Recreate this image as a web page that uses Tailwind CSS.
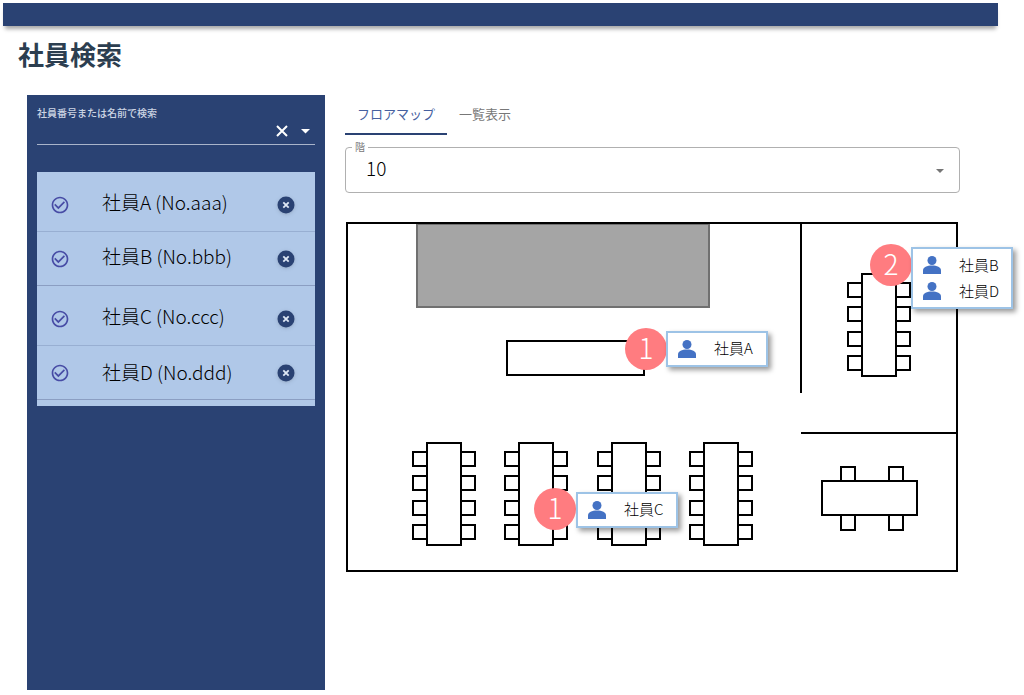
<!DOCTYPE html>
<html lang="ja">
<head>
    <meta charset="UTF-8">
    <meta name="viewport" content="width=device-width, initial-scale=1.0">
    <title>社員検索</title>
    <script src="https://cdn.jsdelivr.net/npm/@tailwindcss/browser@4"></script>
</head>
<body class="min-h-screen bg-white font-['Noto_Sans_CJK_JP',sans-serif] text-black flex flex-col">
    <!-- shared icons -->
    <svg class="hidden">
        <symbol id="check" viewBox="0 0 24 24">
            <path d="M16.59 7.58L10 14.17l-3.59-3.58L5 12l5 5 8-8zM12 2C6.48 2 2 6.48 2 12s4.48 10 10 10 10-4.48 10-10S17.52 2 12 2zm0 18c-4.42 0-8-3.58-8-8s3.58-8 8-8 8 3.58 8 8-3.58 8-8 8z"/>
        </symbol>
        <symbol id="remove" viewBox="0 0 20 20">
            <circle cx="10" cy="10" r="8.5" fill="#2a4273"/>
            <path d="M7.3 7.3l5.4 5.4M12.7 7.3l-5.4 5.4" stroke="#dfe8f5" stroke-width="1.8"/>
        </symbol>
        <symbol id="person" viewBox="0 0 20 20">
            <circle cx="10" cy="5.5" r="4.5"/>
            <path d="M1 19v-3.500c0-3.500 4-5 9-5s9 1.500 9 5V19z"/>
        </symbol>
        <symbol id="desk" viewBox="0 0 64 104">
            <g fill="white" stroke="black" stroke-width="2">
                <path d="M15 10H1v14h14M15 34H1v14h14M15 59H1v14h14M15 83H1v14h14"/>
                <path d="M49 10h14v14H49M49 34h14v14H49M49 59h14v14H49M49 83h14v14H49"/>
                <rect x="15" y="1" width="34" height="102"/>
            </g>
        </symbol>
    </svg>

    <header class="h-[23px] mt-[3px] ml-[3px] mr-[26px] bg-[#2a4273] shadow-[0_5px_4px_-2px_rgba(0,0,0,0.35)]"></header>

    <h1 class="mt-2 ml-[18px] h-10 leading-10 text-[26px] font-bold text-[#2c3e50]">社員検索</h1>

    <div class="flex flex-1 mt-[21px] mb-[5px] ml-[27px] mr-16 gap-5">
        <aside class="w-[298px] shrink-0 bg-[#2a4273] px-[10px] pt-[10px]">
            <label for="search" class="block h-4 leading-4 text-[10px] font-medium text-[#cdd5e4]">社員番号または名前で検索</label>
            <div class="flex items-center h-6 border-b border-[#a9b4ca]">
                <input id="search" type="text" class="flex-1 min-w-0 bg-transparent text-white text-sm outline-none">
                <button type="button" aria-label="クリア" class="w-4 h-4 mr-[7px] mb-1">
                    <svg viewBox="0 0 16 16" class="w-4 h-4"><path d="M3 3l10 10M13 3L3 13" stroke="white" stroke-width="2"/></svg>
                </button>
                <button type="button" aria-label="候補を開く" class="w-4 h-4 mr-[2px] mb-1">
                    <svg viewBox="0 0 16 16" class="w-4 h-4"><path d="M4 6h9l-4.500 4.500z" fill="white"/></svg>
                </button>
            </div>

            <ul class="mt-[27px] pb-[6px] bg-[#b0c8e8] text-[19px]">
                <li class="h-[60px] pt-[6px] flex items-center px-[13px] border-b border-[#98afd2]">
                    <svg class="w-5 h-5 fill-[#474ca5]"><use href="#check"/></svg>
                    <span class="flex-1 ml-8 pb-1 font-light">社員A (No.aaa)</span>
                    <button type="button" aria-label="社員Aを削除" class="w-5 h-5 mr-[6px] rounded-full drop-shadow"><svg class="w-5 h-5"><use href="#remove"/></svg></button>
                </li>
                <li class="h-[54px] flex items-center px-[13px] border-b border-[#8b9ec2]">
                    <svg class="w-5 h-5 fill-[#474ca5]"><use href="#check"/></svg>
                    <span class="flex-1 ml-8 pb-1 font-light">社員B (No.bbb)</span>
                    <button type="button" aria-label="社員Bを削除" class="w-5 h-5 mr-[6px] rounded-full drop-shadow"><svg class="w-5 h-5"><use href="#remove"/></svg></button>
                </li>
                <li class="h-[60px] pt-[6px] flex items-center px-[13px] border-b border-[#98afd2]">
                    <svg class="w-5 h-5 fill-[#474ca5]"><use href="#check"/></svg>
                    <span class="flex-1 ml-8 pb-1 font-light">社員C (No.ccc)</span>
                    <button type="button" aria-label="社員Cを削除" class="w-5 h-5 mr-[6px] rounded-full drop-shadow"><svg class="w-5 h-5"><use href="#remove"/></svg></button>
                </li>
                <li class="h-[54px] flex items-center px-[13px] border-b border-[#8b9ec2]">
                    <svg class="w-5 h-5 fill-[#474ca5]"><use href="#check"/></svg>
                    <span class="flex-1 ml-8 font-light">社員D (No.ddd)</span>
                    <button type="button" aria-label="社員Dを削除" class="w-5 h-5 mr-[6px] rounded-full drop-shadow"><svg class="w-5 h-5"><use href="#remove"/></svg></button>
                </li>
            </ul>
        </aside>

        <main class="flex-1 min-w-0">
            <nav class="flex h-10 text-[13px]">
                <a href="#map" class="px-3 leading-[38px] border-b-2 border-[#2a4273] text-[#4560a0]">フロアマップ</a>
                <a href="#list" class="px-3 leading-[38px] text-[#777777]">一覧表示</a>
            </nav>

            <div class="relative mt-3">
                <label for="floor" class="absolute left-[7px] -top-2 px-[3px] h-4 leading-4 bg-white text-[10px] text-[#777777]">階</label>
                <select id="floor" class="appearance-none w-full h-[46px] px-5 pb-[3px] border border-[#b0b0b0] rounded bg-white text-[19px] font-light">
                    <option>10</option>
                </select>
                <svg viewBox="0 0 10 6" class="absolute right-[15px] top-[21px] w-[10px] h-[6px] pointer-events-none"><path d="M1 1h8l-4 4z" fill="#757575"/></svg>
            </div>

            <!-- floor map -->
            <section id="map" class="relative mt-[29px] ml-px w-[612px] h-[350px]">
                <svg viewBox="0 0 612 350" class="w-full h-full">
                    <g fill="none" stroke="black" stroke-width="2">
                        <rect x="71" y="2" width="292" height="83" fill="#a5a5a5" stroke="#707070"/>
                        <rect x="1" y="1" width="610" height="348"/>
                        <path d="M455 1V171M455 211H611"/>
                        <rect x="161" y="119" width="137" height="34"/>
                        <path d="M495 259v-14h14v14M543 259v-14h14v14M495 293v15h14v-15M543 293v15h14v-15"/>
                        <rect x="476" y="259" width="95" height="34"/>
                    </g>
                    <use href="#desk" x="66" y="220" width="64" height="104"/>
                    <use href="#desk" x="158" y="220" width="64" height="104"/>
                    <use href="#desk" x="251" y="220" width="64" height="104"/>
                    <use href="#desk" x="343" y="220" width="64" height="104"/>
                    <use href="#desk" x="501" y="51" width="64" height="104"/>
                </svg>

                <div class="absolute left-[279px] top-[106px] flex items-start">
                    <span class="w-[42px] h-[42px] rounded-full bg-[#ff7c80] text-white text-[28px] leading-[38px] font-light text-center">1</span>
                    <ul class="mt-[3px] -ml-px w-[102px] px-[9px] py-[3px] bg-white border-2 border-[#9dc3e6] shadow-[3px_3px_5px_rgba(0,0,0,0.4)] text-[15px] font-light">
                        <li class="flex items-center h-[26px] gap-[17px] whitespace-nowrap"><svg class="w-5 h-5 shrink-0 fill-[#4472c4]"><use href="#person"/></svg><span class="pb-[2px]">社員A</span></li>
                    </ul>
                </div>

                <div class="absolute left-[188px] top-[266px] flex items-start">
                    <span class="w-[42px] h-[42px] rounded-full bg-[#ff7c80] text-white text-[28px] leading-[38px] font-light text-center">1</span>
                    <ul class="mt-1 w-[102px] px-[9px] py-[3px] bg-white border-2 border-[#9dc3e6] shadow-[3px_3px_5px_rgba(0,0,0,0.4)] text-[15px] font-light">
                        <li class="flex items-center h-[26px] gap-[17px] whitespace-nowrap"><svg class="w-5 h-5 shrink-0 fill-[#4472c4]"><use href="#person"/></svg><span class="pb-[2px]">社員C</span></li>
                    </ul>
                </div>

                <div class="absolute left-[524px] top-[22px] flex items-start">
                    <span class="w-[42px] h-[42px] rounded-full bg-[#ff7c80] text-white text-[28px] leading-[38px] font-light text-center">2</span>
                    <ul class="mt-[3px] -ml-px w-[102px] px-[9px] py-[3px] bg-white border-2 border-[#9dc3e6] shadow-[3px_3px_5px_rgba(0,0,0,0.4)] text-[15px] font-light">
                        <li class="flex items-center h-[26px] gap-[17px] whitespace-nowrap"><svg class="w-5 h-5 shrink-0 fill-[#4472c4]"><use href="#person"/></svg>社員B</li>
                        <li class="flex items-center h-[26px] gap-[17px] whitespace-nowrap"><svg class="w-5 h-5 shrink-0 fill-[#4472c4]"><use href="#person"/></svg>社員D</li>
                    </ul>
                </div>
            </section>
        </main>
    </div>
</body>
</html>
